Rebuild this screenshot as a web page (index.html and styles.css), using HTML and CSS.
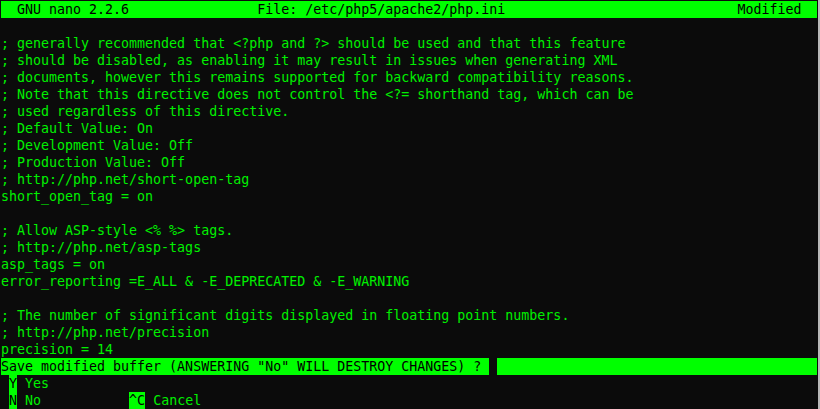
FILE: index.html
```html
<!DOCTYPE html>
<html lang="en">
<head>
    <meta charset="UTF-8">
    <title>GNU nano 2.2.6 - /etc/php5/apache2/php.ini</title>
    <link rel="stylesheet" href="styles.css">
</head>
<body>
    <div class="window">
        <div class="terminal">
            <div class="row bar">  GNU nano 2.2.6                File: /etc/php5/apache2/php.ini                             Modified  </div>
            <div class="row"></div>
            <div class="row">; generally recommended that &lt;?php and ?&gt; should be used and that this feature</div>
            <div class="row">; should be disabled, as enabling it may result in issues when generating XML</div>
            <div class="row">; documents, however this remains supported for backward compatibility reasons.</div>
            <div class="row">; Note that this directive does not control the &lt;?= shorthand tag, which can be</div>
            <div class="row">; used regardless of this directive.</div>
            <div class="row">; Default Value: On</div>
            <div class="row">; Development Value: Off</div>
            <div class="row">; Production Value: Off</div>
            <div class="row">; http://php.net/short-open-tag</div>
            <div class="row">short_open_tag = on</div>
            <div class="row"></div>
            <div class="row">; Allow ASP-style &lt;% %&gt; tags.</div>
            <div class="row">; http://php.net/asp-tags</div>
            <div class="row">asp_tags = on</div>
            <div class="row">error_reporting =E_ALL &amp; -E_DEPRECATED &amp; -E_WARNING</div>
            <div class="row"></div>
            <div class="row">; The number of significant digits displayed in floating point numbers.</div>
            <div class="row">; http://php.net/precision</div>
            <div class="row">precision = 14</div>
            <div class="row prompt"><span class="hl">Save modified buffer (ANSWERING "No" WILL DESTROY CHANGES) ? </span><span class="cursor"> </span><span class="hl fill"></span></div>
            <div class="row"> <span class="hl">Y</span> Yes</div>
            <div class="row"> <span class="hl">N</span> No           <span class="hl">^C</span> Cancel</div>
        </div>
        <div class="scrollbar"></div>
    </div>
</body>
</html>
```

FILE: styles.css
```css
body {
    margin: 0;
    background-color: #0b0b0b;
    overflow: hidden;
}

.window {
    display: flex;
    height: 409px;
}

.terminal {
    width: 816px;
    padding: 1px 0 0 1px;
    font-family: "DejaVu Sans Mono", monospace;
    font-size: 13.3px;
    color: #00f000;
}

.row {
    height: 17px;
    line-height: 17px;
    white-space: pre;
    overflow: hidden;
}

.bar {
    background-color: #00ff00;
    color: #000;
}

.prompt {
    display: flex;
}

.hl {
    display: inline-block;
    height: 17px;
    vertical-align: top;
    background-color: #00ff00;
    color: #000;
}

.cursor {
    width: 8px;
}

.fill {
    flex: 1;
}

.scrollbar {
    width: 2px;
    margin-left: 1px;
    background-color: #b8b8b8;
}
```
